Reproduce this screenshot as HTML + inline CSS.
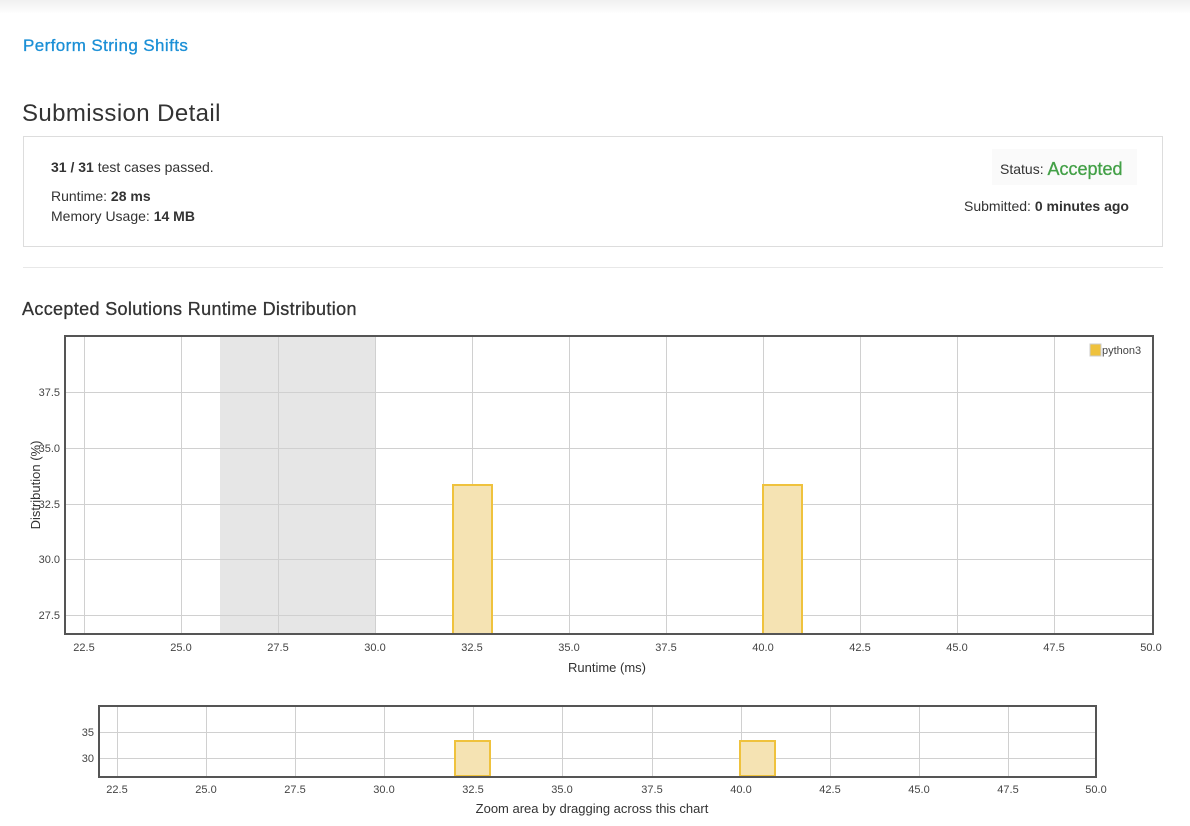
<!DOCTYPE html>
<html><head><meta charset="utf-8"><style>
body{margin:0;width:1190px;height:826px;overflow:hidden;background:#fff;font-family:"Liberation Sans",Arial,sans-serif;color:#333;position:relative}
.topbar{position:absolute;left:0;top:0;width:1190px;height:14px;background:linear-gradient(#f0f0f0,#fff)}
.a{position:absolute;left:23px;top:36px;font-size:17px;color:#1a8fd6;letter-spacing:0.4px;-webkit-text-stroke:0.3px #1a8fd6}
h1{position:absolute;left:22px;top:100px;margin:0;font-size:24px;font-weight:normal;color:#333;letter-spacing:0.4px}
.box{position:absolute;left:23px;top:136px;width:1138px;height:109px;border:1px solid #ddd}
.t{position:absolute;font-size:14px;color:#333}
.hr{position:absolute;left:23px;top:267px;width:1140px;height:1px;background:#e8e8e8}
h3{position:absolute;left:22px;top:299px;margin:0;font-size:18px;font-weight:normal;color:#333;letter-spacing:0.35px;-webkit-text-stroke:0.3px #333}
.st{position:absolute;left:992px;top:149px;width:145px;height:36px;background:#fafafa}
svg{position:absolute;left:0;top:0}
</style></head><body>
<div class="topbar"></div>
<div class="a">Perform String Shifts</div>
<h1>Submission Detail</h1>
<div class="box"></div>
<div class="t" style="left:51px;top:159px"><b>31 / 31</b> test cases passed.</div>
<div class="t" style="left:51px;top:188px">Runtime: <b>28 ms</b></div>
<div class="t" style="left:51px;top:208px">Memory Usage: <b>14 MB</b></div>
<div class="st"></div>
<div class="t" style="left:1000px;top:158px">Status: <span style="color:#43a047;font-size:18px;position:relative;top:1px;-webkit-text-stroke:0.3px #43a047">Accepted</span></div>
<div class="t" style="left:964px;top:198px">Submitted: <b>0 minutes ago</b></div>
<div class="hr"></div>
<h3>Accepted Solutions Runtime Distribution</h3>
<svg width="1190" height="826" font-family="Liberation Sans, Arial, sans-serif">
<rect x="220" y="336" width="155" height="298" fill="#e6e6e6"/>
<g stroke="#d0d0d0" stroke-width="1">
<line x1="84.5" y1="336" x2="84.5" y2="634"/><line x1="181.5" y1="336" x2="181.5" y2="634"/><line x1="278.5" y1="336" x2="278.5" y2="634"/><line x1="375.5" y1="336" x2="375.5" y2="634"/><line x1="472.5" y1="336" x2="472.5" y2="634"/><line x1="569.5" y1="336" x2="569.5" y2="634"/><line x1="666.5" y1="336" x2="666.5" y2="634"/><line x1="763.5" y1="336" x2="763.5" y2="634"/><line x1="860.5" y1="336" x2="860.5" y2="634"/><line x1="957.5" y1="336" x2="957.5" y2="634"/><line x1="1054.5" y1="336" x2="1054.5" y2="634"/>
<line x1="65" y1="392.5" x2="1152" y2="392.5"/><line x1="65" y1="448.5" x2="1152" y2="448.5"/><line x1="65" y1="504.5" x2="1152" y2="504.5"/><line x1="65" y1="559.5" x2="1152" y2="559.5"/><line x1="65" y1="615.5" x2="1152" y2="615.5"/>
</g>
<rect x="453" y="485" width="39" height="149" fill="#f5e3b3" stroke="#efc23d" stroke-width="2"/>
<rect x="763" y="485" width="39" height="149" fill="#f5e3b3" stroke="#efc23d" stroke-width="2"/>
<rect x="65" y="336" width="1088" height="298" fill="none" stroke="#555" stroke-width="2"/>
<rect x="1090" y="344" width="11" height="12" fill="#efc23d" stroke="#ccc"/>
<text x="1102" y="354" font-size="11" fill="#444">python3</text>
<g font-size="11" fill="#444" text-anchor="end">
<text x="60" y="396">37.5</text><text x="60" y="452">35.0</text><text x="60" y="508">32.5</text><text x="60" y="563">30.0</text><text x="60" y="619">27.5</text>
</g>
<text transform="translate(40,485) rotate(-90)" font-size="13" fill="#333" text-anchor="middle">Distribution (%)</text>
<g font-size="11" fill="#444" text-anchor="middle">
<text x="84" y="651">22.5</text><text x="181" y="651">25.0</text><text x="278" y="651">27.5</text><text x="375" y="651">30.0</text><text x="472" y="651">32.5</text><text x="569" y="651">35.0</text><text x="666" y="651">37.5</text><text x="763" y="651">40.0</text><text x="860" y="651">42.5</text><text x="957" y="651">45.0</text><text x="1054" y="651">47.5</text><text x="1151" y="651">50.0</text>
</g>
<text x="607" y="672" font-size="13" fill="#333" text-anchor="middle">Runtime (ms)</text>
<g stroke="#d0d0d0">
<line x1="117.5" y1="707" x2="117.5" y2="776"/><line x1="206.5" y1="707" x2="206.5" y2="776"/><line x1="295.5" y1="707" x2="295.5" y2="776"/><line x1="384.5" y1="707" x2="384.5" y2="776"/><line x1="473.5" y1="707" x2="473.5" y2="776"/><line x1="562.5" y1="707" x2="562.5" y2="776"/><line x1="652.5" y1="707" x2="652.5" y2="776"/><line x1="741.5" y1="707" x2="741.5" y2="776"/><line x1="830.5" y1="707" x2="830.5" y2="776"/><line x1="919.5" y1="707" x2="919.5" y2="776"/><line x1="1008.5" y1="707" x2="1008.5" y2="776"/>
<line x1="99" y1="732.5" x2="1095" y2="732.5"/><line x1="99" y1="758.5" x2="1095" y2="758.5"/>
</g>
<rect x="455" y="741" width="35" height="35" fill="#f5e3b3" stroke="#efc23d" stroke-width="2"/>
<rect x="740" y="741" width="35" height="35" fill="#f5e3b3" stroke="#efc23d" stroke-width="2"/>
<rect x="99" y="706" width="997" height="71" fill="none" stroke="#555" stroke-width="2"/>
<g font-size="11" fill="#444" text-anchor="end"><text x="94" y="736">35</text><text x="94" y="762">30</text></g>
<g font-size="11" fill="#444" text-anchor="middle">
<text x="117" y="793">22.5</text><text x="206" y="793">25.0</text><text x="295" y="793">27.5</text><text x="384" y="793">30.0</text><text x="473" y="793">32.5</text><text x="562" y="793">35.0</text><text x="652" y="793">37.5</text><text x="741" y="793">40.0</text><text x="830" y="793">42.5</text><text x="919" y="793">45.0</text><text x="1008" y="793">47.5</text><text x="1096" y="793">50.0</text>
</g>
<text x="592" y="813" font-size="13" fill="#333" text-anchor="middle">Zoom area by dragging across this chart</text>
</svg>
</body></html>
